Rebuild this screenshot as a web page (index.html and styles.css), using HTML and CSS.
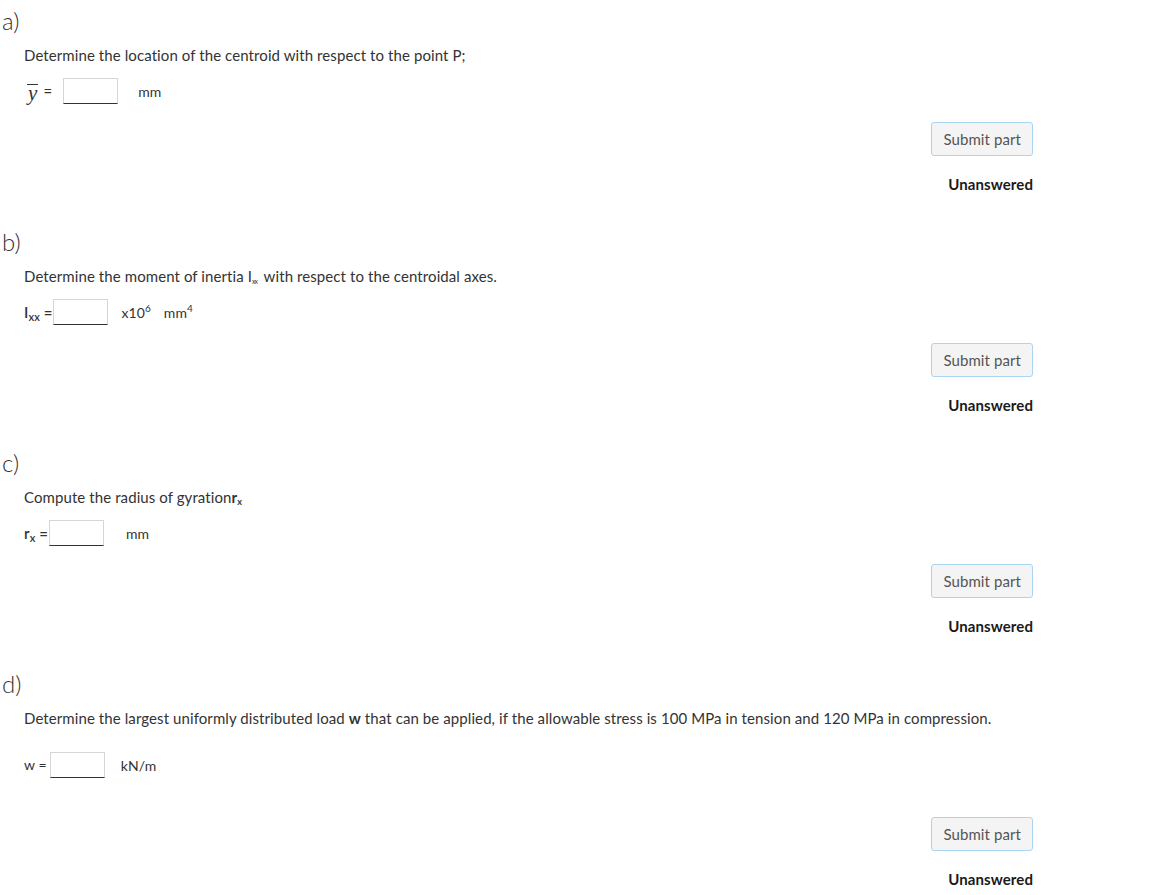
FILE: index.html
```html
<!DOCTYPE html>
<html>
<head>
<meta charset="utf-8">
<link rel="stylesheet" href="styles.css">
</head>
<body>
<div class="page">
  <section class="part">
    <div class="part-label">a)</div>
    <div class="part-body">
      <p class="prompt">Determine the location of the centroid with respect to the point P;</p>
      <div class="answer-row">
        <span class="var var-ybar"><span class="ybar">y</span>=</span>
        <span class="input"></span>
        <span class="unit unit-a">mm</span>
      </div>
    </div>
    <div class="part-footer">
      <button class="submit">Submit part</button>
      <div class="status">Unanswered</div>
    </div>
  </section>

  <section class="part">
    <div class="part-label">b)</div>
    <div class="part-body">
      <p class="prompt">Determine the moment of inertia I<sub class="tiny">xx</sub> with respect to the centroidal axes.</p>
      <div class="answer-row">
        <span class="var var-b">I<sub>xx</sub> =</span>
        <span class="input"></span>
        <span class="unit unit-b">x10<sup>6</sup></span>
        <span class="unit unit-b2">mm<sup>4</sup></span>
      </div>
    </div>
    <div class="part-footer">
      <button class="submit">Submit part</button>
      <div class="status">Unanswered</div>
    </div>
  </section>

  <section class="part">
    <div class="part-label">c)</div>
    <div class="part-body">
      <p class="prompt">Compute the radius of gyration<b>r<sub>x</sub></b></p>
      <div class="answer-row">
        <span class="var var-c">r<sub>x</sub> =</span>
        <span class="input"></span>
        <span class="unit unit-c">mm</span>
      </div>
    </div>
    <div class="part-footer">
      <button class="submit">Submit part</button>
      <div class="status">Unanswered</div>
    </div>
  </section>

  <section class="part part-d">
    <div class="part-label">d)</div>
    <div class="part-body">
      <p class="prompt">Determine the largest uniformly distributed load <b>w</b> that can be applied, if the allowable stress is 100 MPa in tension and 120 MPa in compression.</p>
      <div class="answer-row">
        <span class="var var-d">w =</span>
        <span class="input"></span>
        <span class="unit unit-d">kN/m</span>
      </div>
    </div>
    <div class="part-footer">
      <button class="submit">Submit part</button>
      <div class="status">Unanswered</div>
    </div>
  </section>
</div>
</body>
</html>
```

FILE: styles.css
```css
html, body {
  margin: 0;
  padding: 0;
  background: #fff;
}

.page {
  width: 1031px;
  padding-left: 2px;
  font-family: "Lato", "Liberation Sans", sans-serif;
  font-size: 15px;
  letter-spacing: 0.09px;
  color: #333;
}

.part {
  display: flex;
  flex-direction: column;
  height: 221px;
}

.part-d {
  height: auto;
}

.part-label {
  font-size: 24px;
  font-weight: 300;
  line-height: 28px;
  margin-top: 7px;
  color: #333;
  letter-spacing: 0;
}

.part-body {
  padding-left: 22px;
}

.prompt {
  margin: 10px 0 0 0;
  line-height: 20px;
}

.prompt sub {
  font-size: 9px;
  vertical-align: -2px;
  line-height: 0;
}

.prompt .tiny {
  font-size: 7px;
  letter-spacing: -1px;
  margin-right: 3px;
}

.answer-row {
  display: flex;
  align-items: center;
  height: 26px;
  margin-top: 13px;
  font-size: 14px;
}

.var {
  display: inline-block;
  white-space: pre;
  line-height: 20px;
}

.var sub {
  font-size: 11px;
  vertical-align: -3px;
  line-height: 0;
}

.var-ybar {
  margin-left: 3px;
  margin-right: 11px;
  font-size: 15px;
}

.ybar {
  display: inline-block;
  font-family: "Liberation Serif", serif;
  font-style: italic;
  font-size: 21px;
  line-height: 17px;
  border-top: 1px solid #333;
  padding: 0 1px;
  margin-right: 5px;
  vertical-align: -3px;
}

.var-b {
  margin-right: 1px;
  font-weight: 600;
  font-size: 15px;
}

.var-c {
  margin-right: 1px;
  font-weight: 600;
  font-size: 15px;
}

.var-d {
  margin-right: 3px;
}

.input {
  display: block;
  width: 53px;
  height: 24px;
  background: #fff;
  border: 1px solid #d6d6d6;
  border-bottom-color: #333;
}

.unit sup {
  font-size: 10px;
  vertical-align: 6px;
  line-height: 0;
}

.unit-a { margin-left: 20px; }
.unit-b { margin-left: 13px; }
.unit-b2 { margin-left: 13px; }
.unit-c { margin-left: 22px; }
.unit-d { margin-left: 16px; }

.part-footer {
  display: flex;
  flex-direction: column;
  align-items: flex-end;
  margin-top: 18px;
}

.submit {
  height: 34px;
  padding: 0 11px;
  font-family: inherit;
  font-size: 15px;
  letter-spacing: 0.09px;
  color: #555;
  background: #f4f4f4;
  border: 1px solid #a9d5f2;
  border-radius: 3px;
}

.status {
  margin-top: 18px;
  line-height: 20px;
  font-weight: 700;
  color: #1a1a1a;
}

.part-d .answer-row {
  margin-top: 24px;
}

.part-d .part-footer {
  margin-top: 39px;
}
```
